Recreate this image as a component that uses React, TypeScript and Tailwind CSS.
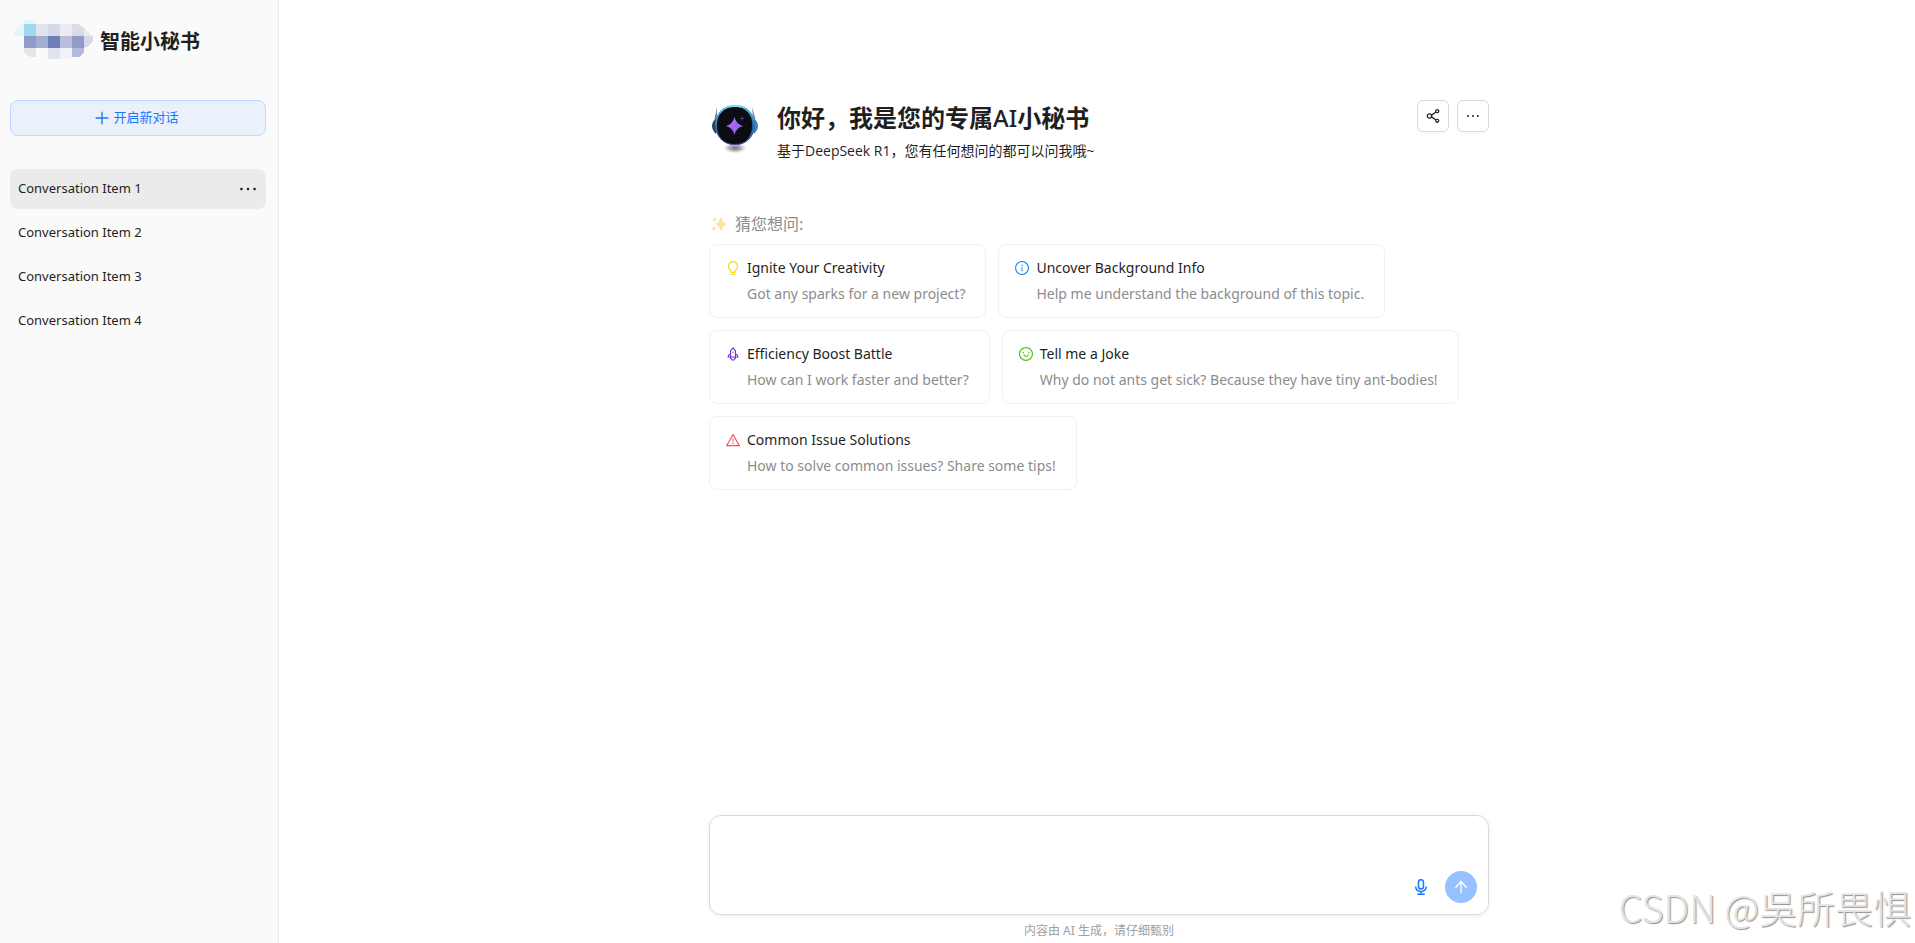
import { useState } from "react";
import type { ReactNode } from "react";
import {
  AiOutlineArrowUp,
  AiOutlineBulb,
  AiOutlineEllipsis,
  AiOutlineInfoCircle,
  AiOutlinePlus,
  AiOutlineRocket,
  AiOutlineShareAlt,
  AiOutlineSmile,
  AiOutlineWarning,
} from "react-icons/ai";

type Prompt = {
  key: string;
  icon: ReactNode;
  title: string;
  description: string;
};

const conversations = ["Conversation Item 1", "Conversation Item 2", "Conversation Item 3", "Conversation Item 4"];

const prompts: Prompt[] = [
  { key: "1", icon: <AiOutlineBulb className="size-4 text-[#ffd700]" />, title: "Ignite Your Creativity", description: "Got any sparks for a new project?" },
  { key: "2", icon: <AiOutlineInfoCircle className="size-4 text-[#1890ff]" />, title: "Uncover Background Info", description: "Help me understand the background of this topic." },
  { key: "3", icon: <AiOutlineRocket className="size-4 text-[#722ed1]" />, title: "Efficiency Boost Battle", description: "How can I work faster and better?" },
  { key: "4", icon: <AiOutlineSmile className="size-4 text-[#52c41a]" />, title: "Tell me a Joke", description: "Why do not ants get sick? Because they have tiny ant-bodies!" },
  { key: "5", icon: <AiOutlineWarning className="size-4 text-[#ff4d4f]" />, title: "Common Issue Solutions", description: "How to solve common issues? Share some tips!" },
];

function Logo() {
  return (
    <svg className="h-10 w-20 shrink-0" viewBox="0 0 80 40" shapeRendering="crispEdges" aria-hidden="true">
      <path d="M0 16V11L7 4H10V0H22V4H10V16Z" fill="#e3f6fb" />
      <path d="M10 4H22V16H10Z" fill="#a0d8ef" />
      <path d="M22 4H34V16H22Z" fill="#e1e4ee" />
      <path d="M34 4H46V16H34Z" fill="#d6d9e8" />
      <path d="M46 4H58V16H46Z" fill="#ebecf3" />
      <path d="M58 4H64L70 8V16H58Z" fill="#d8dbe9" />
      <path d="M70 8L79 16H70Z" fill="#ebebf2" />
      <path d="M10 16H22V28H10Z" fill="#919bc8" />
      <path d="M22 16H34V28H22Z" fill="#a5acd2" />
      <path d="M34 16H46V28H34Z" fill="#6f7fb6" />
      <path d="M46 16H58V28H46Z" fill="#b8bedb" />
      <path d="M58 16H70V28H58Z" fill="#929ac8" />
      <path d="M70 16H79V21L75 26L70 28Z" fill="#d5d8e9" />
      <path d="M10 28H22V37H17L12 34L10 31Z" fill="#e3e5ef" />
      <path d="M34 28H46V39H34Z" fill="#e1e4ef" />
      <path d="M46 28H58V37L50 39H46Z" fill="#f1f2f7" />
      <path d="M58 28H70V33L65 37H58Z" fill="#b3b9d9" />
    </svg>
  );
}

function Robot() {
  return (
    <svg className="h-14 w-[52px] shrink-0" viewBox="4 5 52 56" aria-hidden="true">
      <defs>
        <linearGradient id="shell" x1="0" y1="0" x2="1" y2="1">
          <stop offset="0" stopColor="#3e6f96" />
          <stop offset="0.3" stopColor="#1c3048" />
          <stop offset="0.6" stopColor="#22578a" />
          <stop offset="1" stopColor="#3f3a86" />
        </linearGradient>
        <linearGradient id="rim" x1="0" y1="0" x2="0" y2="1">
          <stop offset="0" stopColor="#5fd4f2" />
          <stop offset="0.5" stopColor="#2f78b0" />
          <stop offset="1" stopColor="#5a4a9c" />
        </linearGradient>
        <linearGradient id="spark" x1="0" y1="0" x2="1" y2="1">
          <stop offset="0" stopColor="#c470e8" />
          <stop offset="1" stopColor="#7d5cf0" />
        </linearGradient>
        <radialGradient id="ground">
          <stop offset="0" stopColor="#6f6f6f" />
          <stop offset="0.5" stopColor="#a8a8a8" stopOpacity="0.8" />
          <stop offset="1" stopColor="#ffffff" stopOpacity="0" />
        </radialGradient>
      </defs>
      <ellipse cx="30" cy="53" rx="13" ry="6" fill="url(#ground)" />
      <path d="M12 12L9.500 24L12 23Z" fill="#7187b0" />
      <path d="M47 12L50.500 24L48 23Z" fill="#7187b0" />
      <path d="M11 23Q3 31 11 39Z" fill="#1f4568" />
      <path d="M49 23Q57 31 49 39Z" fill="#3a86bd" />
      <circle cx="30" cy="30" r="20" fill="url(#shell)" />
      <circle cx="30" cy="30" r="19" fill="none" stroke="url(#rim)" strokeWidth="2" />
      <path d="M30 12C41 12 47 19 47 30C47 42 41 49 30 49C18 49 12 42 12 30C12 19 19 12 30 12Z" fill="#0c0d12" />
      <path d="M24 11Q30 9 36 11L35 12.500Q30 11 25 12.500Z" fill="#7fe4fa" />
      <path d="M29.500 22Q31 29 38 31Q31 33 29.500 40Q28 33 21 31Q28 29 29.500 22Z" fill="url(#spark)" />
      <path d="M37 21.500V25.500M35 23.500H39" stroke="#503a80" strokeWidth="1" />
    </svg>
  );
}

function Sparkles() {
  return (
    <svg className="size-4 shrink-0" viewBox="0 0 16 16" fill="#fde3a3" aria-hidden="true">
      <path d="M10 0.500C11.500 5 12.500 6.500 16 8C12.500 9.500 11.500 11 10 15.500C8.500 11 7.500 9.500 4 8C7.500 6.500 8.500 5 10 0.500Z" />
      <path d="M3.500 0.500Q4 3 6 3.500Q4 4 3.500 6.500Q3 4 1 3.500Q3 3 3.500 0.500Z" />
      <path d="M3 9.500Q3.500 12 5.500 12.500Q3.500 13 3 15.500Q2.500 13 0.500 12.500Q2.500 12 3 9.500Z" />
    </svg>
  );
}

function Mic() {
  return (
    <svg className="size-4" viewBox="0 0 16 16" fill="none" stroke="currentColor" strokeWidth="1.500" aria-hidden="true">
      <rect x="5.500" y="0.700" width="5" height="9.300" rx="2.500" />
      <path d="M2.700 7.500C2.700 10.700 5 12.400 8 12.400C11 12.400 13.300 10.700 13.300 7.500M8 12.400V15.300M4.300 15.300H11.700" />
    </svg>
  );
}

export default function App() {
  const [active, setActive] = useState(conversations[0]);
  const [message, setMessage] = useState("");

  return (
    <div className="relative flex min-h-screen bg-white font-['Noto_Sans','Noto_Sans_CJK_SC',sans-serif] text-[#1f1f1f]">
      <aside className="flex w-[279px] shrink-0 flex-col border-r border-[#ebebeb] bg-[#fafafa] pr-3 pl-2.5">
        <div className="flex items-center gap-1.5 px-1 py-5">
          <Logo />
          <span className="pt-1 text-xl font-bold">智能小秘书</span>
        </div>
        <button className="mt-5 flex h-9 items-center justify-center gap-0.5 rounded-lg border border-[#bfd8fc] bg-[#eaf1fa] pr-1 text-[13px] text-[#1677ff]">
          <AiOutlinePlus className="size-[18px]" />
          开启新对话
        </button>
        <ul className="mt-[33px] flex flex-col gap-1">
          {conversations.map((c) => (
            <li key={c} className={c === active ? "flex h-10 items-center rounded-lg bg-[#ebebeb] pr-1.5 pl-2" : "flex h-10 items-center rounded-lg pr-1.5 pl-2"}>
              <button className="flex-1 text-left text-[13px]" onClick={() => setActive(c)}>{c}</button>
              {c === active && (
                <button aria-label="More"><AiOutlineEllipsis className="size-6" /></button>
              )}
            </li>
          ))}
        </ul>
      </aside>

      <main className="flex flex-1 flex-col items-center pt-25 pl-1">
        <div className="flex w-full max-w-[780px] flex-1 flex-col">
          <header className="flex items-start gap-4">
            <Robot />
            <div className="flex-1">
              <h1 className="text-2xl leading-9 font-bold">你好，我是您的专属<span className="font-medium">AI</span>小秘书</h1>
              <p className="mt-1 text-sm leading-[22px] font-['Open_Sans','Noto_Sans_CJK_SC',sans-serif]">基于DeepSeek R1，您有任何想问的都可以问我哦~</p>
            </div>
            <div className="flex gap-2">
              <button aria-label="Share" className="grid size-8 place-items-center rounded-md border border-[#d9d9d9] shadow-[0_2px_0_rgba(0,0,0,0.02)]"><AiOutlineShareAlt className="size-[18px]" /></button>
              <button aria-label="More" className="grid size-8 place-items-center rounded-md border border-[#d9d9d9] shadow-[0_2px_0_rgba(0,0,0,0.02)]"><AiOutlineEllipsis className="size-[18px]" /></button>
            </div>
          </header>

          <section className="mt-[50px]">
            <h2 className="flex h-6 items-center gap-2 pl-0.5 text-base text-[#8c8c8c]">
              <Sparkles />
              猜您想问:
            </h2>
            <div className="mt-2 flex flex-wrap gap-3">
              {prompts.map((p) => (
                <button key={p.key} className="flex gap-1.5 rounded-lg border border-[#f0f0f0] py-3 pr-5 pl-[15px] text-left text-sm leading-[22px]" onClick={() => setMessage(p.description)}>
                  <span className="flex h-[22px] items-center">{p.icon}</span>
                  <span className="flex flex-col gap-1">
                    <span>{p.title}</span>
                    <span className="text-[#8c8c8c]">{p.description}</span>
                  </span>
                </button>
              ))}
            </div>
          </section>

          <div className="mt-auto flex flex-col rounded-xl border border-[#d9d9d9] p-[11px] shadow-[0_1px_4px_rgba(0,0,0,0.08)]">
            <textarea aria-label="Message" className="h-11 resize-none text-sm outline-none" value={message} onChange={(e) => setMessage(e.target.value)} />
            <div className="flex items-center justify-end gap-2">
              <button aria-label="Voice input" className="grid size-8 place-items-center text-[#1677ff]"><Mic /></button>
              <button aria-label="Send" className="grid size-8 place-items-center rounded-full bg-[#96c0ff] text-white"><AiOutlineArrowUp className="size-[18px]" /></button>
            </div>
          </div>
          <footer className="pt-1.5 pb-0.5 text-center text-xs leading-5 text-[#a0a0a0]">内容由 AI 生成，请仔细甄别</footer>
        </div>
      </main>

      <div className="pointer-events-none absolute right-1 bottom-2 font-['Noto_Sans_CJK_SC',sans-serif] text-[38px] leading-[56px] font-light text-[#e4e4e4] [text-shadow:1px_1px_1px_#909090]">
        CSDN @吳所畏惧
      </div>
    </div>
  );
}
